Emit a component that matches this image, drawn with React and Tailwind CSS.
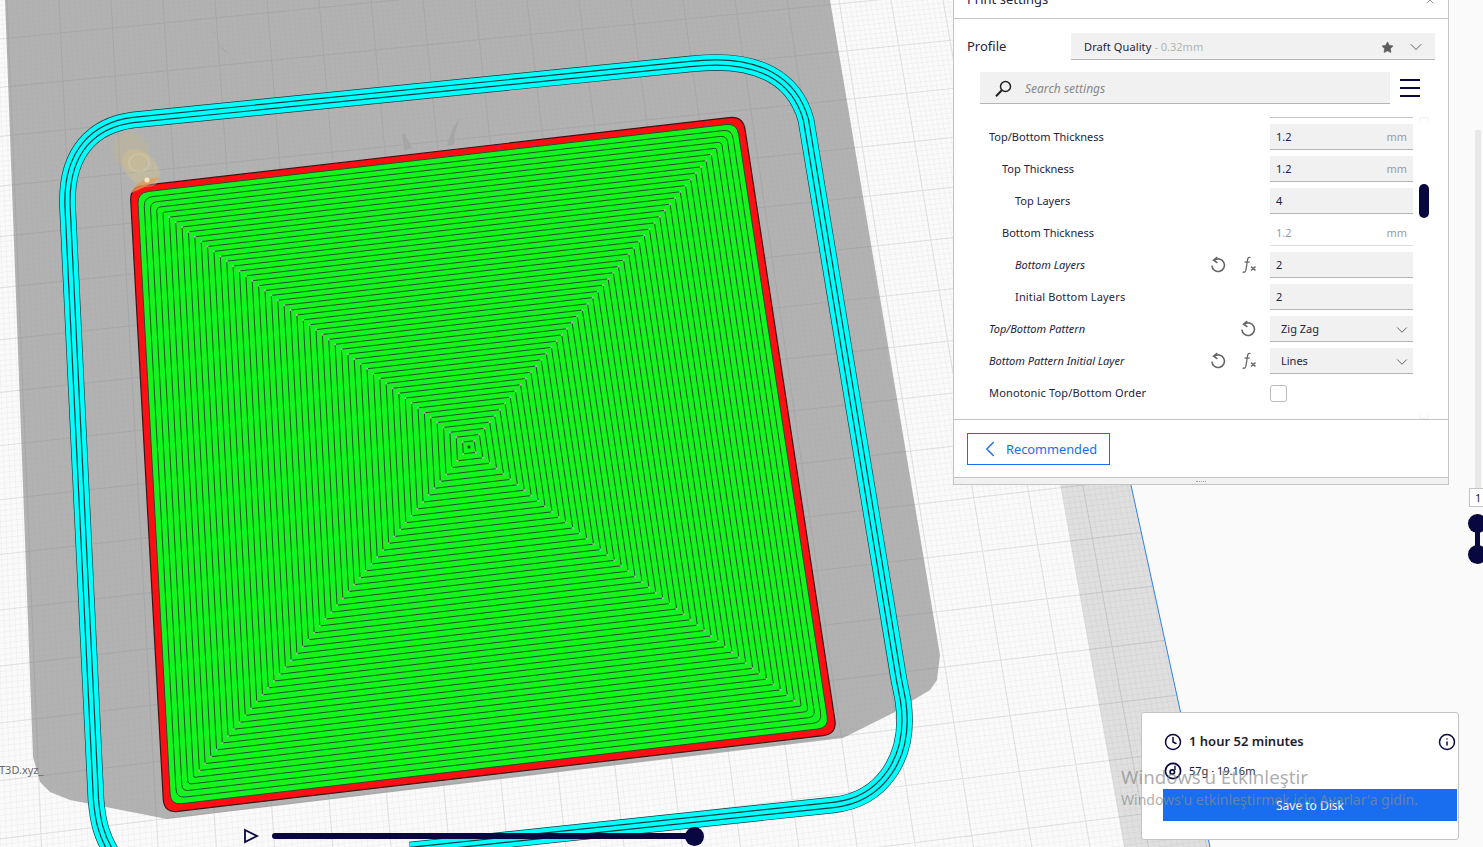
import { ChevronDown, ChevronLeft, Clock, Info, Star, X } from "lucide-react";

const font = "font-['Noto_Sans',sans-serif]";

const rows = [
  { label: "Top/Bottom Thickness", indent: 0, value: "1.2", unit: "mm" },
  { label: "Top Thickness", indent: 13, value: "1.2", unit: "mm" },
  { label: "Top Layers", indent: 26, value: "4" },
  { label: "Bottom Thickness", indent: 13, value: "1.2", unit: "mm", computed: true },
  { label: "Bottom Layers", indent: 26, value: "2", italic: true, reset: true, fx: true },
  { label: "Initial Bottom Layers", indent: 26, value: "2", wide: true },
  { label: "Top/Bottom Pattern", indent: 0, value: "Zig Zag", italic: true, reset: true, select: true },
  { label: "Bottom Pattern Initial Layer", indent: 0, value: "Lines", italic: true, reset: true, fx: true, select: true },
  { label: "Monotonic Top/Bottom Order", indent: 0, check: true, wide: true },
];

const center = [469, 447];
const corners = [
  [130, 187],
  [743, 116],
  [837, 734],
  [164, 813],
];

function scaled(t) {
  return corners.map(([x, y]) => [center[0] + (x - center[0]) * t, center[1] + (y - center[1]) * t]);
}

// polygon with rounded corners, r in px
function roundedPath(list, r) {
  if (r <= 0) return `M${list.map((p) => p.join(" ")).join("L")}Z`;
  let d = "";
  list.forEach((p, i) => {
    const prev = list[(i + 3) % 4];
    const next = list[(i + 1) % 4];
    const toward = (a, b) => {
      const len = Math.hypot(b[0] - a[0], b[1] - a[1]);
      return [a[0] + ((b[0] - a[0]) / len) * r, a[1] + ((b[1] - a[1]) / len) * r];
    };
    const a = toward(p, prev);
    const b = toward(p, next);
    d += `${i === 0 ? "M" : "L"}${a[0]} ${a[1]}Q${p[0]} ${p[1]} ${b[0]} ${b[1]}`;
  });
  return d + "Z";
}

// perspective floor grid, div = lines per major cell
function gridLines(div) {
  const lines = [];
  for (let i = -12 * div; i < 26 * div; i++) {
    const x = 215 + (52 * i) / div;
    const s = 0.000142 * (x + 280);
    lines.push(`M${x} 0L${x + 900 * s} 900`);
  }
  for (let i = -4 * div; i < 20 * div; i++) {
    const k = i / div;
    const y = 39 + 48 * k * (1 + 0.0074 * k);
    const slope = -0.097 - 0.00003 * y;
    lines.push(`M0 ${y}L1500 ${y + 1500 * slope}`);
  }
  return lines.join("");
}

const grayPoints =
  "5,0 830,0 940,655 937,680 930,690 910,702 893,713 843,738 167,819 70,800 50,792 40,782 33,757";

function BuildPlate() {
  const N = 52;
  const inner = 0.978;
  const rings = [];
  for (let i = 0; i < N; i++) rings.push(scaled(inner * (1 - i / N)));
  const skirt =
    "M111 852C101 834 98 822 96 800L67.5 205C66 150 95 125 133 120L690 64C760 56 795 80 806 120L899 680L903 700C912 760 880 800 833 805L410 850";
  return (
    <svg className="absolute left-0 top-0" width="1483" height="847" viewBox="0 0 1483 847">
      <defs>
        <clipPath id="plate">
          <polygon points="0,0 1025,0 1210,847 0,847" />
        </clipPath>
        <clipPath id="gray">
          <polygon points={grayPoints} />
        </clipPath>
      </defs>
      <g clipPath="url(#plate)">
        <polygon points="975,0 1025,0 1210,847 1124,847" fill="#dfdfdf" />
        <path d={gridLines(10)} stroke="#000" strokeOpacity="0.03" strokeWidth="1" fill="none" />
        <path d={gridLines(1)} stroke="#000" strokeOpacity="0.07" strokeWidth="1.2" fill="none" />
      </g>
      <polyline points="1025,0 1210,847" stroke="#2f7fe8" strokeWidth="1" fill="none" />
      <polygon points={grayPoints} fill="#b2b2b2" />
      <g clipPath="url(#gray)">
        <path d={gridLines(10)} stroke="#000" strokeOpacity="0.012" strokeWidth="1" fill="none" />
        <path d={gridLines(1)} stroke="#000" strokeOpacity="0.045" strokeWidth="1.2" fill="none" />
      </g>

      <path d="M214 28C215 40 222 50 230 54C222 51 217 44 214 28Z" fill="#a0a0a0" />
      <path d="M402 134L405 134L412 148L404 151Z" fill="#a6a6a6" />
      <path d="M460 117L455 133L454 145L447 146L452 130Z" fill="#a6a6a6" />

      <path d={skirt} fill="none" stroke="#12393f" strokeWidth="16.5" />
      <path d={skirt} fill="none" stroke="#00ffff" strokeWidth="15.2" />
      <path d={skirt} fill="none" stroke="#12393f" strokeWidth="6.4" />
      <path d={skirt} fill="none" stroke="#00ffff" strokeWidth="4" />

      <path d={roundedPath(corners, 14)} fill="#ff0f14" stroke="#3a1414" strokeWidth="1.2" />
      <path d={roundedPath(rings[0], 11)} fill="#14f51e" stroke="#234d28" strokeWidth="1" />
      {rings.slice(1).map((ring, i) => (
        <path
          key={i}
          d={roundedPath(ring, Math.max(0, 9 - i * 2.5))}
          fill="none"
          stroke="#234d28"
          strokeWidth="1"
        />
      ))}
      {rings.slice(5).map((ring, i) =>
        ring.map(([x, y], j) => (
          <rect key={`${i}-${j}`} x={x - 0.9} y={y - 0.9} width="1.8" height="1.8" fill="#b4b4b4" />
        ))
      )}
      <rect x="467.6" y="445.6" width="2.8" height="2.8" fill="#234d28" />

      <ellipse cx="131" cy="151" rx="17" ry="20" transform="rotate(-30 131 151)" fill="#c9b98a" opacity="0.32" />
      <ellipse cx="141" cy="168" rx="22" ry="15" transform="rotate(45 141 168)" fill="#d4c68c" opacity="0.4" />
      <ellipse cx="139" cy="163" rx="10" ry="9" fill="none" stroke="#ddd5a8" strokeWidth="2" opacity="0.3" />
      <path d="M131 193C134 183 148 176 160 178C152 184 142 188 131 193Z" fill="#e59a55" opacity="0.75" />
      <circle cx="147" cy="180" r="2.5" fill="#f2e9bb" />
    </svg>
  );
}

function ResetIcon() {
  return (
    <svg width="18" height="18" viewBox="0 0 18 18" fill="none" stroke="#666" strokeWidth="1.6">
      <path d="M5.2 4.3A6.3 6.3 0 1 1 2.9 9.6" />
      <path d="M8.2 1.2L4.6 4.2L8.4 6.8" />
    </svg>
  );
}

function FxIcon() {
  return (
    <svg width="16" height="18" viewBox="0 0 16 18" fill="none" stroke="#666" strokeWidth="1.3">
      <path d="M9.5 1.5C7.5 0.8 6.8 2 6.5 4L5 13.5C4.7 15.8 3.5 16.8 1.5 16" />
      <path d="M3.6 6H8.6" />
      <path d="M10 10.5L14.5 14.5M14.5 10.5L10 14.5" strokeWidth="1.5" />
    </svg>
  );
}

function SearchIcon() {
  return (
    <svg width="18" height="18" viewBox="0 0 18 18" fill="none" stroke="#222">
      <circle cx="11.5" cy="6.5" r="5" strokeWidth="1.5" />
      <path d="M7.8 10.2L2 16.2" strokeWidth="2" />
    </svg>
  );
}

function SettingRow({ row }) {
  return (
    <div className="flex h-[32px] items-center text-[11px] text-[#23233c]">
      <span
        className={`${row.italic ? "italic" : ""} ${row.wide ? "tracking-[0.15px]" : ""}`}
        style={{ paddingLeft: row.indent }}
      >
        {row.label}
      </span>
      <div className="ml-auto flex items-center">
        {row.reset && <ResetIcon />}
        {row.fx && (
          <span className="ml-[14px] flex w-[16px] justify-center">
            <FxIcon />
          </span>
        )}
        {row.check ? (
          <span className="ml-[14px] mr-[126px] h-[17px] w-[17px] rounded-[3px] border border-[#bbb] bg-white" />
        ) : (
          <div
            className={`ml-[13px] flex h-[26px] w-[143px] items-center border-b pt-[2px] ${
              row.computed ? "border-[#ddd] bg-white" : "border-[#b5b5b5] bg-[#f1f1f1]"
            } ${row.select ? "pl-[11px] pr-[2px]" : "pl-[6px] pr-[6px]"}`}
          >
            <span className={row.computed ? "text-[#9a9aa8]" : ""}>{row.value}</span>
            {row.unit && <span className="ml-auto text-[#9a9aa8]">{row.unit}</span>}
            {row.select && <ChevronDown size={18} strokeWidth={1.1} className="ml-auto text-[#444]" />}
          </div>
        )}
      </div>
    </div>
  );
}

function SettingsPanel() {
  return (
    <div className={`absolute left-[953px] top-[-20px] w-[496px] border border-[#c4c4c4] bg-white ${font}`}>
      <div className="flex h-[38px] items-center justify-between border-b border-[#c4c4c4] pl-[13px] pr-[12px]">
        <span className="text-[13px] text-[#23233c]">Print settings</span>
        <X size={12} strokeWidth={1.2} className="text-[#444]" />
      </div>
      <div className="mr-[13px] mt-[14px] flex h-[27px] items-center pl-[13px]">
        <span className="w-[104px] text-[13px] text-[#23233c]">Profile</span>
        <div className="flex h-full flex-1 items-center border-b border-[#b5b5b5] bg-[#f1f1f1] pl-[13px] pr-[9px] pt-[2px] text-[11px]">
          <span className="tracking-[0.01em] text-[#23233c]">Draft Quality</span>
          <span className="ml-[3px] text-[#b4b4b4]">- 0.32mm</span>
          <Star size={13} fill="#5c5c5c" strokeWidth={1} className="ml-auto text-[#5c5c5c]" />
          <ChevronDown size={20} strokeWidth={1} className="ml-[12px] text-[#444]" />
        </div>
      </div>
      <div className="mt-[12px] flex h-[32px] items-center pl-[26px]">
        <div className="flex h-full w-[410px] items-center border-b border-[#b5b5b5] bg-[#f1f1f1] pl-[14px] pt-[2px]">
          <SearchIcon />
          <span className="ml-[13px] text-[12px] italic text-[#888]">Search settings</span>
        </div>
        <div className="ml-[10px] flex w-[20px] flex-col gap-[6px]">
          <span className="h-[2px] bg-[#08073f]" />
          <span className="h-[2px] bg-[#08073f]" />
          <span className="h-[2px] bg-[#08073f]" />
        </div>
      </div>
      <div className="relative mt-[13px] pb-[10px] pl-[35px] pr-[35px]">
        <div className="ml-auto w-[143px] border-b border-[#c4c4c4]" />
        <div className="h-[3px]" />
        {rows.map((row) => (
          <SettingRow key={row.label} row={row} />
        ))}
        <span className="absolute right-[19px] top-0 h-[4px] w-[10px] rounded-t-[3px] border border-b-0 border-[#eee]" />
        <span className="absolute right-[19px] top-[67px] h-[34px] w-[10px] rounded-full bg-[#08073f]" />
        <span className="absolute bottom-0 right-[19px] h-[4px] w-[10px] rounded-b-[3px] border border-t-0 border-[#eee]" />
      </div>
      <div className="h-[58px] border-t border-[#c4c4c4] pl-[13px] pt-[13px]">
        <div className="flex h-[32px] w-[143px] items-center border border-[#196ef0] pl-[9px] text-[13px] text-[#196ef0]">
          <ChevronLeft size={26} strokeWidth={1.3} />
          <span className="ml-[3px] pt-[2px] text-[12.8px]">Recommended</span>
        </div>
      </div>
      <div className="flex h-[7px] items-center justify-center border-t border-[#c4c4c4] bg-[#f1f1f1]">
        <span className="h-px w-[10px] border-t border-dotted border-[#999]" />
      </div>
    </div>
  );
}

function SpoolIcon() {
  return (
    <svg width="18" height="18" viewBox="0 0 18 18" fill="none" stroke="#08073f" strokeWidth="1.7">
      <circle cx="9" cy="9" r="7.6" />
      <circle cx="8.3" cy="10" r="2.2" />
      <path d="M11 3.8V8" strokeWidth="1.4" />
    </svg>
  );
}

function PrintCard() {
  return (
    <div className={`absolute left-[1141px] top-[712px] h-[128px] w-[318px] rounded-[3px] border border-[#c4c4c4] bg-white pl-[21px] pr-[1px] pt-[19px] ${font}`}>
      <div className="flex h-[20px] items-center pl-[1px] text-[13px] font-semibold text-[#1c1c2c]">
        <Clock size={18} strokeWidth={2} className="text-[#08073f]" />
        <span className="ml-[7px]">1 hour 52 minutes</span>
        <Info size={18} strokeWidth={2} className="ml-auto mr-[1px] text-[#08073f]" />
      </div>
      <div className="mt-[9px] flex h-[20px] items-center pl-[1px] text-[11px] text-[#1c1c2c]">
        <SpoolIcon />
        <span className="ml-[7px]">57g · 19.16m</span>
      </div>
      <div className="mt-[8px] flex h-[32px] items-center justify-center bg-[#196ef0] pt-[2px] text-[12px] text-white">
        Save to Disk
      </div>
    </div>
  );
}

function Watermark() {
  return (
    <div className={`pointer-events-none absolute left-[1121px] top-[763px] whitespace-nowrap text-[#8a8a8a]/70 ${font}`}>
      <div className="text-[18.7px] leading-[28px]">Windows'u Etkinleştir</div>
      <div className="text-[14px] leading-[18px]">Windows'u etkinleştirmek için Ayarlar'a gidin.</div>
    </div>
  );
}

export default function App() {
  return (
    <div className="relative h-[847px] w-[1483px] overflow-hidden bg-[#fafafa]">
      <BuildPlate />
      <span className={`absolute left-[-1px] top-[762px] text-[11px] text-[#666] ${font}`}>T3D.xyz_</span>
      <SettingsPanel />
      <div className="absolute left-[1475px] top-[130px] h-[358px] w-[6px] bg-[#e8e8e8]" />
      <div className={`absolute left-[1469px] top-[488px] flex h-[19px] w-[20px] items-center border border-[#c4c4c4] bg-white pl-[5px] pt-[2px] text-[11px] text-[#23233c] ${font}`}>
        1
      </div>
      <div className="absolute left-[1468px] top-[514px] flex w-[19px] flex-col items-center">
        <span className="h-[19px] w-[19px] rounded-full bg-[#08073f]" />
        <span className="my-[-2px] h-[16px] w-[5px] bg-[#08073f]" />
        <span className="h-[19px] w-[19px] rounded-full bg-[#08073f]" />
      </div>
      <div className="absolute left-[243px] top-[826px] flex h-[20px] items-center">
        <svg width="16" height="16" viewBox="0 0 16 16" fill="none" stroke="#08073f" strokeWidth="1.8">
          <path d="M2 2L14 8L2 14Z" />
        </svg>
        <span className="ml-[13px] h-[6px] w-[423px] rounded-full bg-[#08073f]" />
        <span className="ml-[-10px] h-[19px] w-[19px] rounded-full bg-[#08073f]" />
      </div>
      <PrintCard />
      <Watermark />
    </div>
  );
}
